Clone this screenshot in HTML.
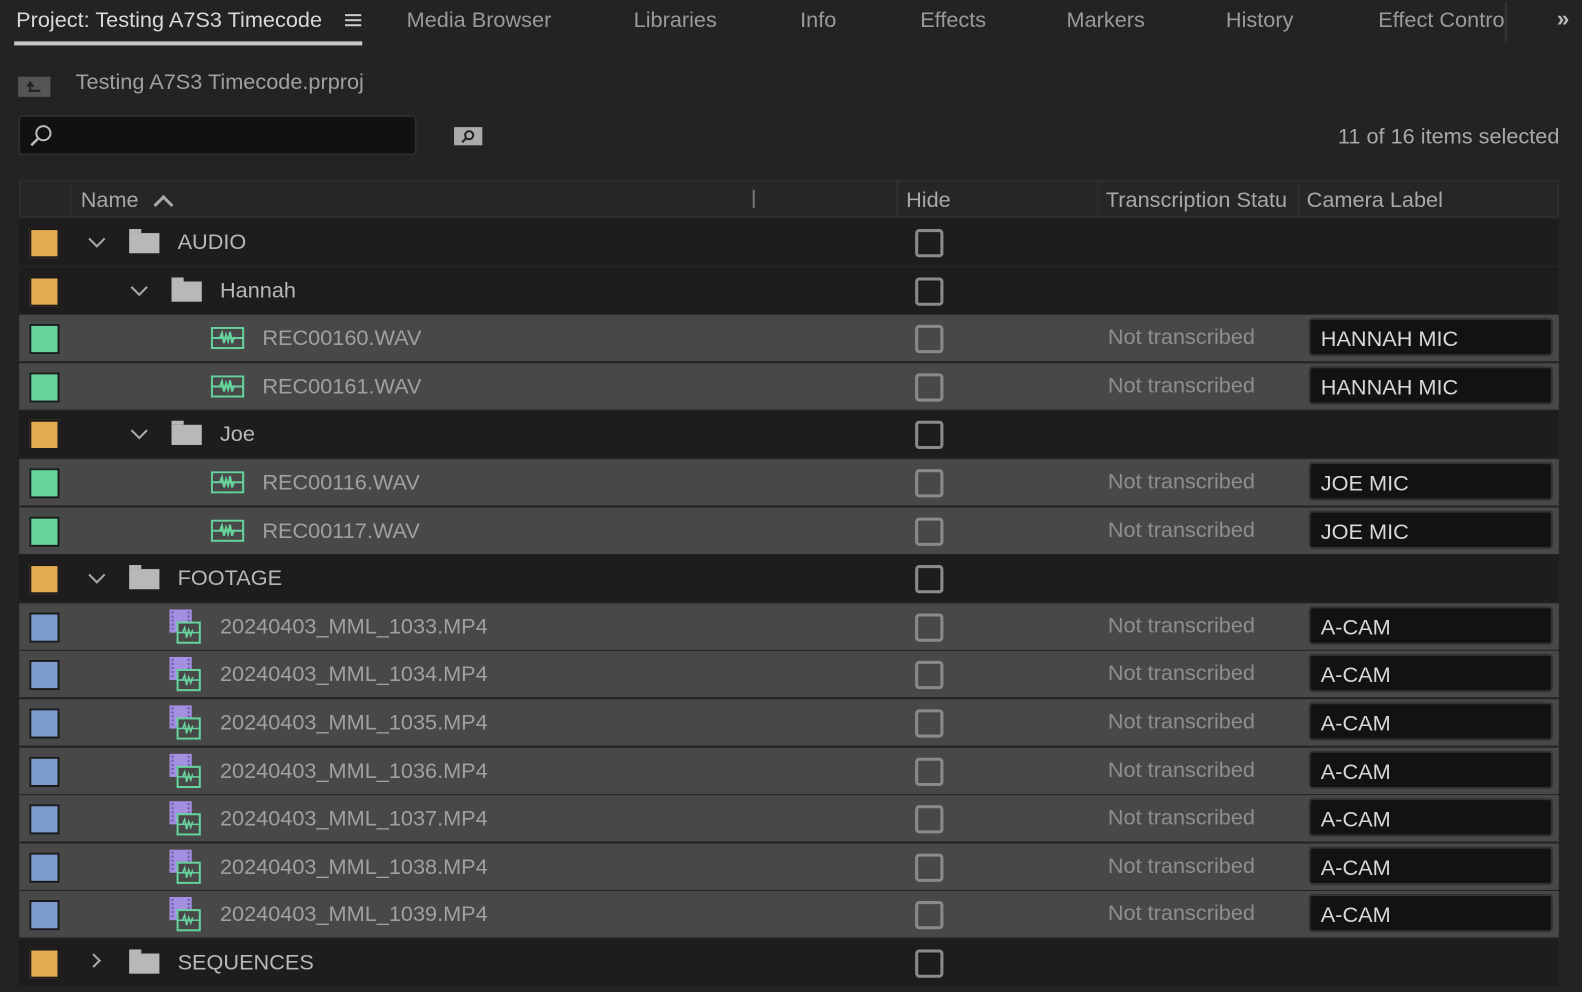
<!DOCTYPE html>
<html><head><style>
*{margin:0;padding:0;box-sizing:border-box}
body{width:1582px;height:992px;background:#232323;overflow:hidden}
#w{width:1568px;height:983px;position:relative;transform:scale(1.009);transform-origin:0 0;font-family:"Liberation Sans",sans-serif;color:#a8a8a8}
.a{position:absolute;white-space:nowrap}
.tab{top:8px;font-size:21.5px;color:#9a9a9a}
.row{position:absolute;left:19px;width:1526px;height:46px}
.d{background:#1d1d1d}
.l{background:#484848}
.sw{position:absolute;left:10px;top:9px;width:30px;height:30px;border:2px solid #1a1a1a}
.cb{position:absolute;left:888px;top:10px;width:28px;height:28px;border:3px solid #8a8a8a;border-radius:4px}
.nm{position:absolute;top:11px;font-size:21.5px}
.nt{position:absolute;left:1079px;top:10px;font-size:21.5px;color:#8e8e8e}
.cl{position:absolute;left:1278px;top:3px;width:242px;height:38px;background:#121212;border:2px solid #333;border-radius:4px;font-size:21.5px;color:#d8d8d8;padding:7px 10px}
.chev{position:absolute;top:14px;width:12px;height:12px;border-right:2px solid #aaa;border-bottom:2px solid #aaa;transform:rotate(45deg)}
.chr{position:absolute;top:16px;width:10px;height:10px;border-right:2px solid #aaa;border-bottom:2px solid #aaa;transform:rotate(-45deg)}
.fold{position:absolute;top:14px;width:30px;height:20px;background:#b8b8b8}
.fold:before{content:"";position:absolute;left:0;top:-4px;width:12px;height:4px;background:#b8b8b8}
</style></head><body><div id="w">
<div class="a tab" style="left:16px;color:#d8d8d8">Project: Testing A7S3 Timecode</div>
<div class="a" style="left:342px;top:14px;width:16px;height:2px;background:#ccc;box-shadow:0 5px #ccc,0 10px #ccc"></div>
<div class="a" style="left:14px;top:41px;width:345px;height:4px;background:#c8c8c8"></div>
<div class="a tab" style="left:403px">Media Browser</div>
<div class="a tab" style="left:628px">Libraries</div>
<div class="a tab" style="left:793px">Info</div>
<div class="a tab" style="left:912px">Effects</div>
<div class="a tab" style="left:1057px">Markers</div>
<div class="a tab" style="left:1215px">History</div>
<div class="a tab" style="left:1366px">Effect Contro</div>
<div class="a" style="left:1492px;top:2px;width:1px;height:40px;background:#444"></div>
<div class="a" style="left:1543px;top:6px;font-size:22px;font-weight:bold;color:#bbb">&#187;</div>
<div class="a" style="left:18px;top:76px;width:32px;height:20px;background:#555"></div>
<svg class="a" style="left:24px;top:79px" width="20" height="14"><path d="M4 11H16M6 11V4M3 7l3-4 3 4" fill="none" stroke="#222" stroke-width="2"/></svg>
<div class="a" style="left:75px;top:69px;font-size:21.5px;color:#a0a0a0">Testing A7S3 Timecode.prproj</div>
<div class="a" style="left:18px;top:114px;width:395px;height:40px;background:#111;border:2px solid #2c2c2c;border-radius:4px"></div>
<svg class="a" style="left:28px;top:122px" width="26" height="26"><circle cx="15" cy="10" r="7" fill="none" stroke="#bbb" stroke-width="2"/><line x1="10" y1="15" x2="3" y2="22" stroke="#bbb" stroke-width="2.5"/></svg>
<div class="a" style="left:450px;top:126px;width:28px;height:18px;background:#aaa"></div>
<svg class="a" style="left:455px;top:126px" width="18" height="18"><circle cx="10" cy="8" r="4" fill="none" stroke="#222" stroke-width="2"/><line x1="7" y1="11" x2="3" y2="15" stroke="#222" stroke-width="2"/></svg>
<div class="a" style="left:1326px;top:123px;font-size:21.5px;color:#a8a8a8">11 of 16 items selected</div>
<div class="a" style="left:19px;top:178px;width:1526px;height:38px;background:#262626;border:2px solid #2e2e2e"></div>
<div class="a" style="left:69px;top:178px;width:2px;height:38px;background:#2e2e2e"></div>
<div class="a" style="left:888px;top:178px;width:2px;height:38px;background:#2e2e2e"></div>
<div class="a" style="left:1087px;top:178px;width:2px;height:38px;background:#2e2e2e"></div>
<div class="a" style="left:1286px;top:178px;width:2px;height:38px;background:#2e2e2e"></div>
<div class="a" style="left:746px;top:188px;width:2px;height:18px;background:#777"></div>
<div class="a" style="left:80px;top:186px;font-size:21.5px;color:#a8a8a8">Name</div>
<div class="a" style="left:155px;top:196px;width:14px;height:14px;border-left:3px solid #aaa;border-top:3px solid #aaa;transform:rotate(45deg)"></div>
<div class="a" style="left:898px;top:186px;font-size:21.5px;color:#a8a8a8">Hide</div>
<div class="a" style="left:1096px;top:186px;font-size:21.5px;color:#a8a8a8">Transcription Statu</div>
<div class="a" style="left:1295px;top:186px;font-size:21.5px;color:#a8a8a8">Camera Label</div>
<div id="rows"></div>
</div>
<script>
var R=[
['d','#e3aa4f','f',0,'AUDIO'],
['d','#e3aa4f','f',1,'Hannah'],
['l','#66d39d','a',2,'REC00160.WAV','HANNAH MIC'],
['l','#66d39d','a',2,'REC00161.WAV','HANNAH MIC'],
['d','#e3aa4f','f',1,'Joe'],
['l','#66d39d','a',2,'REC00116.WAV','JOE MIC'],
['l','#66d39d','a',2,'REC00117.WAV','JOE MIC'],
['d','#e3aa4f','f',0,'FOOTAGE'],
['l','#7b9bcc','v',1,'20240403_MML_1033.MP4','A-CAM'],
['l','#7b9bcc','v',1,'20240403_MML_1034.MP4','A-CAM'],
['l','#7b9bcc','v',1,'20240403_MML_1035.MP4','A-CAM'],
['l','#7b9bcc','v',1,'20240403_MML_1036.MP4','A-CAM'],
['l','#7b9bcc','v',1,'20240403_MML_1037.MP4','A-CAM'],
['l','#7b9bcc','v',1,'20240403_MML_1038.MP4','A-CAM'],
['l','#7b9bcc','v',1,'20240403_MML_1039.MP4','A-CAM'],
['d','#e3aa4f','r',0,'SEQUENCES']];
var h='';
R.forEach(function(r,i){
var top=217+i*47.6;
h+='<div class="row '+r[0]+'" style="top:'+top+'px"><div class="sw" style="background:'+r[1]+'"></div>';
var ind=r[3]*42;
if(r[2]=='f'||r[2]=='r'){
 h+=(r[2]=='f'?'<div class="chev" style="left:'+(71+ind)+'px"></div>':'<div class="chr" style="left:'+(69+ind)+'px"></div>');
 h+='<div class="fold" style="left:'+(109+ind)+'px"></div><div class="nm" style="left:'+(157+ind)+'px;color:#b8b8b8">'+r[4]+'</div>';
}else if(r[2]=='a'){
 h+='<svg style="position:absolute;left:190px;top:12px" width="34" height="22"><rect x="1" y="1" width="31" height="20" fill="none" stroke="#66d39d" stroke-width="2"/><path d="M2 11H32M9 11l2-5 2 10 2-8 2 6 2-9 2 11 2-6" fill="none" stroke="#66d39d" stroke-width="2"/></svg><div class="nm" style="left:241px;color:#a0a0a0">'+r[4]+'</div>';
}else{
 h+='<svg style="position:absolute;left:149px;top:6px" width="32" height="36"><rect x="0" y="0" width="22" height="23" fill="#a48fe0"/><path d="M3 2v20M19 2v20" stroke="#6a55a8" stroke-width="2" stroke-dasharray="2 2"/><rect x="8" y="13" width="22" height="20" fill="#484848" stroke="#66d39d" stroke-width="2"/><path d="M9 23H30M13 23l2-5 2 10 2-8 2 6 2-6" fill="none" stroke="#66d39d" stroke-width="1.5"/></svg><div class="nm" style="left:199px;color:#a0a0a0">'+r[4]+'</div>';
}
h+='<div class="cb"></div>';
if(r[5])h+='<div class="nt">Not transcribed</div><div class="cl">'+r[5]+'</div>';
h+='</div>';
});
document.getElementById('rows').innerHTML=h;
</script>
</body></html>
